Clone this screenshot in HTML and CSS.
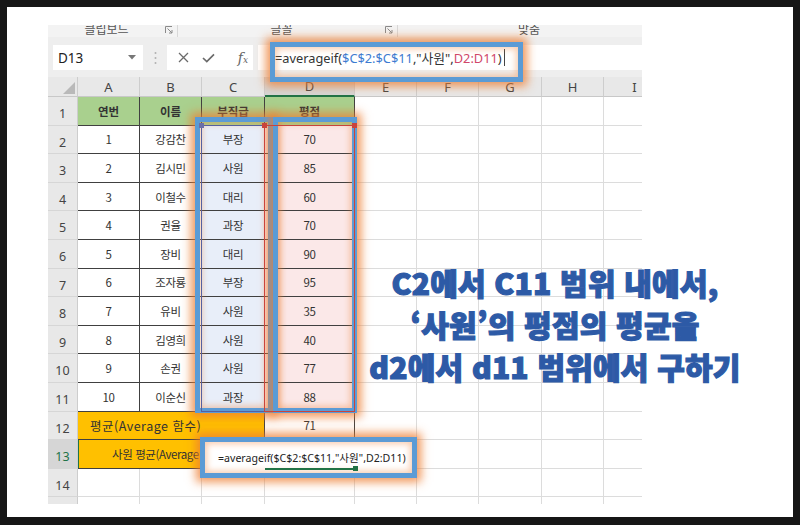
FILE: index.html
```html
<!DOCTYPE html>
<html lang="ko">
<head>
<meta charset="utf-8">
<title>AVERAGEIF</title>
<link rel="stylesheet" href="styles.css">
</head>
<body>
<div class="frame">
  <div class="sheet">
    <div class="ribbon">
      <div class="grp g1"><span class="grp-label">클립보드</span><span class="launch"><svg width="8" height="8" viewBox="0 0 8 8"><path d="M0.5 7V0.5H7M2.5 2.5L7 7M4 7H7V4" fill="none" stroke="#8a8a8a" stroke-width="1"/></svg></span></div>
      <div class="grp g2"><span class="grp-label">글꼴</span><span class="launch"><svg width="8" height="8" viewBox="0 0 8 8"><path d="M0.5 7V0.5H7M2.5 2.5L7 7M4 7H7V4" fill="none" stroke="#8a8a8a" stroke-width="1"/></svg></span></div>
      <div class="grp g3"><span class="grp-label">맞춤</span></div>
    </div>
    <div class="fbar">
      <div class="namebox"><span>D13</span><svg width="8" height="5" viewBox="0 0 8 5"><polygon points="0,0 8,0 4,4.5" fill="#777"/></svg></div>
      <div class="sep"><svg width="3" height="14" viewBox="0 0 3 14"><circle cx="1.5" cy="2" r="1" fill="#b0b0b0"/><circle cx="1.5" cy="7" r="1" fill="#b0b0b0"/><circle cx="1.5" cy="12" r="1" fill="#b0b0b0"/></svg></div>
      <div class="fxbox">
        <span class="ic"><svg width="11" height="11" viewBox="0 0 11 11"><path d="M1 1L10 10M10 1L1 10" stroke="#6a6a6a" stroke-width="1.3"/></svg></span>
        <span class="ic"><svg width="13" height="10" viewBox="0 0 13 10"><path d="M1 5L4.8 8.6L12 1.4" fill="none" stroke="#6a6a6a" stroke-width="1.7"/></svg></span>
        <span class="ic fx">f<span class="fx-x">x</span></span>
      </div>
      <div class="finput">=averageif(<span class="ref-c">$C$2:$C$11</span>,"사원",<span class="ref-d">D2:D11</span>)<span class="caret"></span></div>
    </div>
    <div class="fhl"></div>

    <div class="gridwrap">
      <div class="grid cells">
        <div class="corner"><svg width="12" height="12" viewBox="0 0 12 12"><polygon points="12,0 12,12 0,12" fill="#b9b9b9"/></svg></div>
        <div class="ch">A</div><div class="ch">B</div><div class="ch">C</div><div class="ch act">D</div><div class="ch">E</div><div class="ch">F</div><div class="ch">G</div><div class="ch">H</div><div class="ch">I</div>

        <div class="rh">1</div><div class="c t hdr">연번</div><div class="c t hdr">이름</div><div class="c t hdr">부직급</div><div class="c t hdr">평점</div><div class="c"></div><div class="c"></div><div class="c"></div><div class="c"></div><div class="c"></div>

        <div class="rh">2</div><div class="c t">1</div><div class="c t">강감찬</div><div class="c t cb">부장</div><div class="c t dp">70</div><div class="c"></div><div class="c"></div><div class="c"></div><div class="c"></div><div class="c"></div>
        <div class="rh">3</div><div class="c t">2</div><div class="c t">김시민</div><div class="c t cb">사원</div><div class="c t dp">85</div><div class="c"></div><div class="c"></div><div class="c"></div><div class="c"></div><div class="c"></div>
        <div class="rh">4</div><div class="c t">3</div><div class="c t">이철수</div><div class="c t cb">대리</div><div class="c t dp">60</div><div class="c"></div><div class="c"></div><div class="c"></div><div class="c"></div><div class="c"></div>
        <div class="rh">5</div><div class="c t">4</div><div class="c t">권율</div><div class="c t cb">과장</div><div class="c t dp">70</div><div class="c"></div><div class="c"></div><div class="c"></div><div class="c"></div><div class="c"></div>
        <div class="rh">6</div><div class="c t">5</div><div class="c t">장비</div><div class="c t cb">대리</div><div class="c t dp">90</div><div class="c"></div><div class="c"></div><div class="c"></div><div class="c"></div><div class="c"></div>
        <div class="rh">7</div><div class="c t">6</div><div class="c t">조자룡</div><div class="c t cb">부장</div><div class="c t dp">95</div><div class="c"></div><div class="c"></div><div class="c"></div><div class="c"></div><div class="c"></div>
        <div class="rh">8</div><div class="c t">7</div><div class="c t">유비</div><div class="c t cb">사원</div><div class="c t dp">35</div><div class="c"></div><div class="c"></div><div class="c"></div><div class="c"></div><div class="c"></div>
        <div class="rh">9</div><div class="c t">8</div><div class="c t">김영희</div><div class="c t cb">사원</div><div class="c t dp">40</div><div class="c"></div><div class="c"></div><div class="c"></div><div class="c"></div><div class="c"></div>
        <div class="rh">10</div><div class="c t">9</div><div class="c t">손권</div><div class="c t cb">사원</div><div class="c t dp">77</div><div class="c"></div><div class="c"></div><div class="c"></div><div class="c"></div><div class="c"></div>
        <div class="rh">11</div><div class="c t">10</div><div class="c t">이순신</div><div class="c t cb">과장</div><div class="c t dp">88</div><div class="c"></div><div class="c"></div><div class="c"></div><div class="c"></div><div class="c"></div>

        <div class="rh">12</div><div class="c t gold g12">평균(Average 함수)</div><div class="c t">71</div><div class="c"></div><div class="c"></div><div class="c"></div><div class="c"></div><div class="c"></div>
        <div class="rh sel">13</div><div class="c t gold g13">사원 평균(Average if 함수)</div><div class="c"></div><div class="c"></div><div class="c"></div><div class="c"></div><div class="c"></div><div class="c"></div>
        <div class="rh">14</div><div class="c"></div><div class="c"></div><div class="c"></div><div class="c"></div><div class="c"></div><div class="c"></div><div class="c"></div><div class="c"></div><div class="c"></div>
        <div class="rh">15</div><div class="c"></div><div class="c"></div><div class="c"></div><div class="c"></div><div class="c"></div><div class="c"></div><div class="c"></div><div class="c"></div><div class="c"></div>
      </div>

      <div class="grid marks">
        <div class="rng rng-c"></div>
        <div class="rng rng-d"></div>
        <div class="hl hl-c"></div>
        <div class="hl hl-d"></div>
        <div class="hl fbox">=averageif($C$2:$C$11,"사원",D2:D11)<span class="gline"></span></div>
      </div>
    </div>
  </div>

  <div class="callout">
    <div>C2에서 C11 범위 내에서,</div>
    <div>‘사원’의 평점의 평균을</div>
    <div>d2에서 d11 범위에서 구하기</div>
  </div>
</div>
</body>
</html>
```

FILE: styles.css
```css
* { box-sizing: border-box; }

body {
  margin: 0;
  width: 800px;
  height: 525px;
  overflow: hidden;
  background: #161616;
  font-family: "Noto Sans CJK KR", "Noto Sans", sans-serif;
}

.frame {
  position: relative;
  margin: 7px 7px 0 7px;
  width: 786px;
  height: 510px;
  background: #fff;
  padding: 18px 0 0 41px;
}

.sheet {
  position: relative;
  width: 594px;
  height: 479px;
  overflow: hidden;
}

/* ribbon group labels (cut at the top, as in the screenshot) */
.ribbon {
  display: flex;
  height: 12px;
  background: #f3f3f3;
  overflow: hidden;
}
.grp {
  flex: none;
  display: flex;
  border-right: 1px solid #d8d8d8;
}
.g1 { width: 130px; }
.g2 { width: 220px; }
.g3 { width: 262px; border-right: 0; }
.grp-label {
  flex: 1;
  text-align: center;
  font-size: 12px;
  line-height: 12px;
  margin-top: -2px;
  color: #555;
}
.launch {
  width: 12px;
  padding-top: 1px;
  display: flex;
  align-items: flex-start;
}

/* formula bar */
.fbar {
  display: flex;
  height: 40px;
  background: #eeeeee;
  padding: 8px 0 7px 5px;
}
.namebox {
  flex: none;
  width: 90px;
  background: #fff;
  display: flex;
  align-items: center;
  justify-content: space-between;
  padding: 0 7px 0 5px;
  font-family: "Noto Sans", sans-serif;
  font-size: 13.5px;
  color: #222;
}
.sep {
  flex: none;
  width: 24px;
  display: flex;
  align-items: center;
  justify-content: center;
}
.fxbox {
  flex: none;
  width: 86px;
  background: #fff;
  display: flex;
  align-items: center;
}
.ic {
  width: 18px;
  margin-left: 7px;
  display: flex;
  align-items: center;
  justify-content: center;
}
.ic.fx {
  margin-left: 17px;
  font-family: "DejaVu Serif", serif;
  font-style: italic;
  font-size: 14px;
  color: #666;
}
.fx-x {
  font-size: 9px;
  margin-top: 5px;
}
.finput {
  flex: 1;
  margin-left: 5px;
  background: #fff;
  display: flex;
  align-items: center;
  padding-left: 17px;
  font-family: "Noto Sans", "Noto Sans CJK KR", sans-serif;
  font-size: 12.8px;
  color: #333;
  white-space: nowrap;
}
.ref-c { color: #3d7bd1; }
.ref-d { color: #d1476a; }
.caret {
  display: inline-block;
  width: 1px;
  height: 17px;
  margin-left: 2px;
  background: #444;
}
.fhl {
  position: absolute;
  left: 222px;
  top: 17px;
  width: 253px;
  height: 40px;
  border: 5px solid #5b9bd5;
  box-shadow: 0 0 9px 4px rgba(237, 125, 49, 0.8), inset 0 0 6px 2px rgba(237, 125, 49, 0.4);
}

/* grid */
.gridwrap { display: grid; }
.grid {
  grid-area: 1 / 1;
  display: grid;
  grid-template-columns: 30px 62px 62px 63px 90px 62px 62px 63px 62px 62px;
  grid-template-rows: 20px repeat(15, 28.6px);
}
.marks { pointer-events: none; }

.corner, .ch, .rh {
  background: #e8e8e8;
  border-right: 1px solid #cdcdcd;
  border-bottom: 1px solid #c8c8c8;
  color: #444;
  font-family: "Noto Sans", sans-serif;
}
.corner {
  display: flex;
  align-items: flex-end;
  justify-content: flex-end;
  padding: 0 2px 2px 0;
}
.ch {
  display: flex;
  align-items: center;
  justify-content: center;
  font-size: 13px;
}
.ch.act {
  background: #d6d6d6;
  border-bottom: 2px solid #217346;
}
.rh {
  display: flex;
  align-items: flex-end;
  justify-content: center;
  padding-bottom: 4px;
  font-size: 12.5px;
  line-height: 1;
  border-bottom-color: #d6d6d6;
}
.rh.sel {
  background: #d6d6d6;
  color: #217346;
}

.c {
  border-right: 1px solid #dcdcdc;
  border-bottom: 1px solid #dcdcdc;
  display: flex;
  align-items: center;
  justify-content: center;
  font-size: 11.5px;
  letter-spacing: -0.4px;
  color: #333;
  white-space: nowrap;
  overflow: hidden;
}
.t { border-color: #404040; }
.hdr {
  background: #a9d08e;
  font-weight: 700;
  letter-spacing: 0;
}
.cb { background: #e8eef9; }
.dp { background: #fbe8e8; }
.gold {
  grid-column: span 3;
  background: #ffc000;
  justify-content: flex-start;
}
.g12 {
  padding-left: 12px;
  font-size: 12.5px;
  letter-spacing: 0.5px;
}
.g13 {
  padding-left: 34px;
  box-shadow: inset 1px 0 0 #217346;
}

/* range outlines */
.rng {
  position: relative;
  border: 1px solid;
}
.rng::before, .rng::after {
  content: "";
  position: absolute;
  top: -3px;
  width: 5px;
  height: 5px;
}
.rng-c {
  grid-column: 4;
  grid-row: 3 / 13;
  margin: -1px 0 0 -1px;
  border-color: #56609f;
}
.rng-d {
  grid-column: 5;
  grid-row: 3 / 13;
  margin: -1px 0 0 -1px;
  border-color: #c9433c;
}
.rng-c::before { left: -3px; background: #6b6fa8; }
.rng-c::after { right: -3px; background: #c9433c; }
.rng-d::before { left: -3px; background: #c9433c; }
.rng-d::after { right: -3px; background: #c9433c; }

/* highlight boxes */
.hl {
  border: 5px solid #5b9bd5;
  box-shadow: 0 0 9px 4px rgba(237, 125, 49, 0.8), inset 0 0 6px 2px rgba(237, 125, 49, 0.4);
}
.hl-c {
  grid-column: 4;
  grid-row: 3 / 13;
  margin: -9px -8px -1px -7px;
}
.hl-d {
  grid-column: 5;
  grid-row: 3 / 13;
  margin: -9px -2px -1px 8px;
}
.fbox {
  position: relative;
  grid-column: 4 / 7;
  grid-row: 14;
  margin: -3px 0 -9px -2px;
  background: #fff;
  display: flex;
  align-items: center;
  padding-left: 13px;
  font-family: "Noto Sans", "Noto Sans CJK KR", sans-serif;
  font-size: 10.6px;
  color: #222;
  white-space: nowrap;
}
.gline {
  position: absolute;
  left: 60px;
  top: 26px;
  width: 90px;
  height: 2px;
  background: #217346;
}
.gline::after {
  content: "";
  position: absolute;
  right: -3px;
  top: -2px;
  width: 5px;
  height: 5px;
  background: #217346;
}

/* callout text */
.callout {
  position: absolute;
  left: 338px;
  top: 254px;
  width: 420px;
  text-align: center;
  font-family: "Noto Sans CJK KR", sans-serif;
  font-size: 30px;
  line-height: 42px;
  font-weight: 900;
  letter-spacing: 0.2px;
  color: #2d5aa6;
  -webkit-text-stroke: 1.2px #2d5aa6;
  white-space: nowrap;
}
```
